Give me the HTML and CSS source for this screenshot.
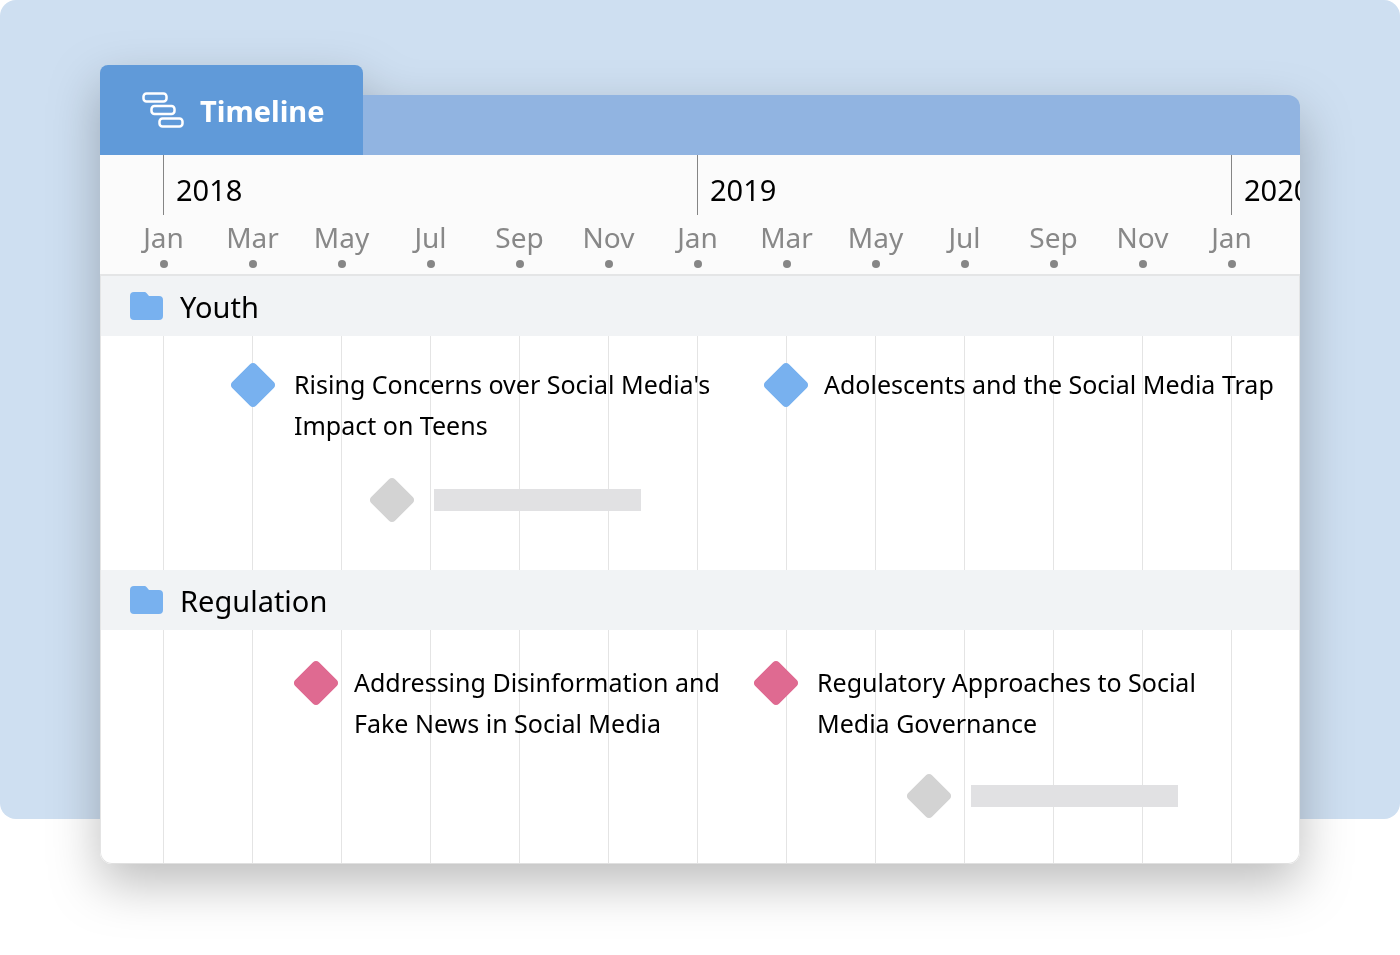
FILE: index.html
```html
<!DOCTYPE html>
<html lang="en">

<head>
    <meta charset="UTF-8">
    <meta name="viewport" content="width=device-width, initial-scale=1.0">
    <title>Timeline</title>
    <link rel="stylesheet" href="styles.css">
</head>

<body>
    <!-- shared shapes -->
    <svg class="shapes" aria-hidden="true">
        <symbol id="diamond" viewBox="0 0 46 46">
            <path d="M20 2.200a4.200 4.200 0 0 1 6 0L43.800 20a4.200 4.200 0 0 1 0 6L26 43.800a4.200 4.200 0 0 1-6 0L2.200 26a4.200 4.200 0 0 1 0-6z" />
        </symbol>
        <symbol id="folder" viewBox="0 0 33 28">
            <path d="M4 0h10c1.2 0 2 .4 2.700 1.200L19 4h10a4 4 0 0 1 4 4v16a4 4 0 0 1-4 4H4a4 4 0 0 1-4-4V4a4 4 0 0 1 4-4z" />
        </symbol>
    </svg>

    <main class="hero">
        <div class="card">
            <div class="tab-bar">
                <button type="button" class="tab">
                    <svg class="tab-icon" viewBox="0 0 42 36" aria-hidden="true">
                        <rect x="1.500" y="1.500" width="23" height="8" rx="3" />
                        <rect x="9.500" y="14" width="23" height="8" rx="3" />
                        <rect x="17.500" y="26.500" width="23" height="8" rx="3" />
                    </svg>
                    Timeline
                </button>
                <div class="tab-rest"></div>
            </div>

            <div class="board">
                <div class="ruler">
                    <div class="years">
                        <span class="year">2018</span>
                        <span class="year">2019</span>
                        <span class="year">2020</span>
                    </div>
                    <div class="months">
                        <span class="month">Jan</span>
                        <span class="month">Mar</span>
                        <span class="month">May</span>
                        <span class="month">Jul</span>
                        <span class="month">Sep</span>
                        <span class="month">Nov</span>
                        <span class="month">Jan</span>
                        <span class="month">Mar</span>
                        <span class="month">May</span>
                        <span class="month">Jul</span>
                        <span class="month">Sep</span>
                        <span class="month">Nov</span>
                        <span class="month">Jan</span>
                    </div>
                </div>

                <section>
                    <h2 class="group">
                        <svg class="folder" aria-hidden="true"><use href="#folder" /></svg>
                        Youth
                    </h2>
                    <div class="lane">
                        <div class="event concerns">
                            <svg class="diamond blue" aria-hidden="true"><use href="#diamond" /></svg>
                            <p>Rising Concerns over Social Media's<br>Impact on Teens</p>
                        </div>
                        <div class="event near trap">
                            <svg class="diamond blue" aria-hidden="true"><use href="#diamond" /></svg>
                            <p>Adolescents and the Social Media Trap</p>
                        </div>
                        <div class="event empty youth-empty">
                            <svg class="diamond" aria-hidden="true"><use href="#diamond" /></svg>
                            <span class="bar"></span>
                        </div>
                    </div>
                </section>

                <section>
                    <h2 class="group">
                        <svg class="folder" aria-hidden="true"><use href="#folder" /></svg>
                        Regulation
                    </h2>
                    <div class="lane">
                        <div class="event near fake-news">
                            <svg class="diamond pink" aria-hidden="true"><use href="#diamond" /></svg>
                            <p>Addressing Disinformation and<br>Fake News in Social Media</p>
                        </div>
                        <div class="event governance">
                            <svg class="diamond pink" aria-hidden="true"><use href="#diamond" /></svg>
                            <p>Regulatory Approaches to Social<br>Media Governance</p>
                        </div>
                        <div class="event empty regulation-empty">
                            <svg class="diamond" aria-hidden="true"><use href="#diamond" /></svg>
                            <span class="bar"></span>
                        </div>
                    </div>
                </section>
            </div>
        </div>
    </main>
</body>

</html>
```
FILE: styles.css
```css
* {
    box-sizing: border-box;
}

body {
    margin: 0;
    padding-bottom: 136px;
    background-color: white;
    color: #000;
    font-family: "Noto Sans", "Open Sans", sans-serif;
}

.shapes {
    position: absolute;
    width: 0;
    height: 0;
}

.hero {
    display: flex;
    flex-direction: column;
    padding: 65px 100px 0;
    background-color: #cedff1;
    border-radius: 16px;
}

/* the card hangs out below the blue backdrop */
.card {
    margin-bottom: -45px;
    filter: drop-shadow(0 20px 25px rgba(0, 0, 0, 0.26));
}

.tab-bar {
    display: flex;
    align-items: flex-end;
}

.tab {
    display: flex;
    align-items: center;
    gap: 16px;
    min-width: 262px;
    height: 90px;
    padding: 0 39px 0 42px;
    border: none;
    border-radius: 8px 8px 0 0;
    background-color: #609ad9;
    color: white;
    font-family: inherit;
    font-size: 29px;
    font-weight: bold;
    cursor: pointer;
}

.tab-icon {
    width: 42px;
    height: 36px;
    fill: none;
    stroke: white;
    stroke-width: 2.5;
}

.tab-rest {
    flex: 1;
    height: 60px;
    border-radius: 0 12px 0 0;
    background-color: #91b4e1;
}

.board {
    overflow: hidden;
    border-radius: 0 0 12px 12px;
    background-color: white;
}

.ruler {
    height: 121px;
    overflow: hidden;
    border-bottom: 2px solid #e4e5e6;
    background-color: #fbfbfb;
}

.years {
    display: flex;
    padding-left: 63px;
}

.year {
    flex: 0 0 534px;
    height: 60px;
    padding-left: 12px;
    border-left: 1px solid #858585;
    font-size: 29px;
    line-height: 69px;
}

.months {
    display: flex;
    padding-left: 19px;
}

.month {
    display: flex;
    flex: 0 0 89px;
    flex-direction: column;
    align-items: center;
    color: #888;
    font-size: 28px;
    line-height: 45px;
}

.month::after {
    content: "";
    width: 8px;
    height: 8px;
    border-radius: 50%;
    background-color: #868686;
}

.group {
    display: flex;
    align-items: center;
    gap: 17px;
    height: 60px;
    margin: 0;
    padding-left: 29px;
    border-left: 1px solid #e4e5e6;
    border-right: 1px solid #e4e5e6;
    background-color: #f1f3f5;
    font-size: 29px;
    font-weight: normal;
}

.folder {
    width: 33px;
    height: 28px;
    fill: #78b1ef;
}

/* one vertical line every two months */
.lane {
    position: relative;
    height: 234px;
    border-left: 1px solid #e4e4e4;
    border-right: 1px solid #e4e4e4;
    background-image: repeating-linear-gradient(to right, #e4e4e4 0, #e4e4e4 1px, transparent 1px, transparent 89px);
    background-position: 62px 0;
    background-repeat: no-repeat;
}

section:last-child .lane {
    border-bottom: 1px solid #e0e0e0;
    border-radius: 0 0 12px 12px;
}

/* events are placed by date on the lane */
.event {
    position: absolute;
    display: flex;
    gap: 18px;
    white-space: nowrap;
}

.near {
    gap: 15px;
}

.event p {
    margin: 0;
    padding-top: 2px;
    font-size: 25px;
    line-height: 41px;
}

.diamond {
    flex: none;
    width: 46px;
    height: 46px;
    fill: #d3d3d3;
}

.blue {
    fill: #78b1ef;
}

.pink {
    fill: #df6a91;
}

.empty {
    align-items: center;
    gap: 19px;
}

.bar {
    width: 207px;
    height: 22px;
    background-color: #e1e1e3;
}

.concerns {
    top: 26px;
    left: 129px;
}

.trap {
    top: 26px;
    left: 662px;
}

.youth-empty {
    top: 141px;
    left: 268px;
}

.fake-news {
    top: 30px;
    left: 192px;
}

.governance {
    top: 30px;
    left: 652px;
}

.regulation-empty {
    top: 143px;
    left: 805px;
}
```
